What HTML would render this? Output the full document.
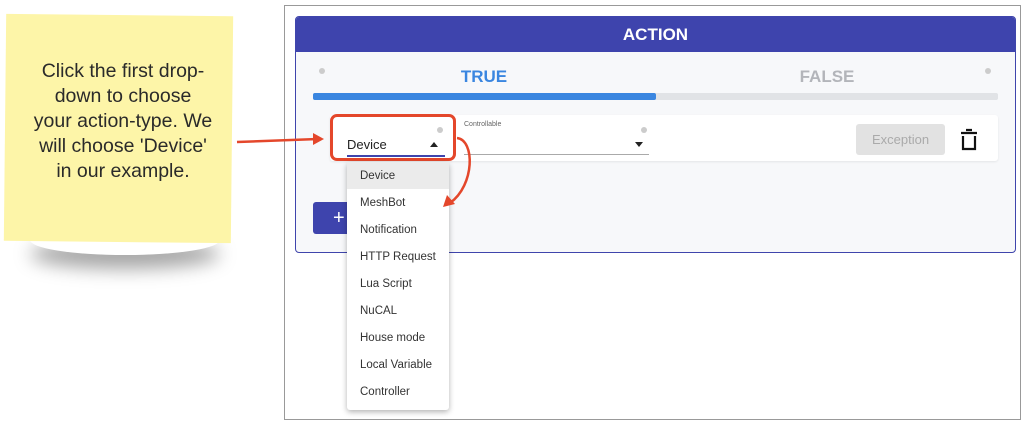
<!DOCTYPE html>
<html><head><style>
body{margin:0;width:1024px;height:425px;background:#fff;position:relative;overflow:hidden;font-family:"Liberation Sans",sans-serif}
.a{position:absolute}
</style></head><body>
<div class="a" style="left:30px;top:225px;width:190px;height:30px;border-radius:50%;box-shadow:0 14px 18px rgba(0,0,0,0.35);"></div>
<div class="a" style="left:5px;top:15px;width:227px;height:227px;background:#fdf5a8;transform:rotate(0.6deg);"></div>
<div class="a" style="left:0px;top:59px;width:246px;text-align:center;font-size:19.5px;line-height:25px;color:#2a2a2a;">Click the first drop-<br>down to choose<br>your action-type. We<br>will choose 'Device'<br>in our example.</div>

<div class="a" style="left:284px;top:5px;width:735px;height:413px;border:1px solid #999;"></div>
<div class="a" style="left:295px;top:16px;width:719px;height:235px;border:1.5px solid #3f45ac;border-radius:4px;background:#f7f8fa;overflow:hidden;">
  <div class="a" style="left:0;top:0;width:100%;height:35px;background:#3e44ad;color:#fff;font-weight:bold;font-size:17px;text-align:center;line-height:35px;">ACTION</div>
</div>
<div class="a" style="left:319px;top:68px;width:6px;height:6px;border-radius:50%;background:#ccc"></div>
<div class="a" style="left:985px;top:68px;width:6px;height:6px;border-radius:50%;background:#ccc"></div>
<div class="a" style="left:434px;top:67px;width:100px;text-align:center;color:#3a86e0;font-size:17px;font-weight:bold;">TRUE</div>
<div class="a" style="left:777px;top:67px;width:100px;text-align:center;color:#b3b5ba;font-size:17px;font-weight:bold;">FALSE</div>
<div class="a" style="left:313px;top:93px;width:685px;height:7px;background:#e1e3e6;border-radius:2px"></div>
<div class="a" style="left:313px;top:93px;width:343px;height:7px;background:#3a86e0;border-radius:2px"></div>
<div class="a" style="left:330px;top:115px;width:668px;height:46px;background:#fff;border-radius:3px;box-shadow:0 1px 2px rgba(0,0,0,0.08)"></div>
<div class="a" style="left:437px;top:127px;width:6px;height:6px;border-radius:50%;background:#ccc"></div>
<div class="a" style="left:641px;top:127px;width:6px;height:6px;border-radius:50%;background:#ccc"></div>
<div class="a" style="left:347px;top:137px;font-size:13px;color:#222">Device</div>
<div class="a" style="left:430px;top:142px;width:0;height:0;border-left:4px solid transparent;border-right:4px solid transparent;border-bottom:5px solid #222"></div>
<div class="a" style="left:347px;top:155px;width:98px;height:2px;background:#3e44ad"></div>
<div class="a" style="left:464px;top:121px;font-size:7px;color:#666">Controllable</div>
<div class="a" style="left:635px;top:142px;width:0;height:0;border-left:4px solid transparent;border-right:4px solid transparent;border-top:5px solid #222"></div>
<div class="a" style="left:464px;top:154px;width:185px;height:1px;background:#aaa"></div>
<div class="a" style="left:856px;top:124px;width:89px;height:31px;background:#e2e2e2;border-radius:3px;color:#aaa;font-size:13px;text-align:center;line-height:31px;">Exception</div>
<svg class="a" style="left:958px;top:127px" width="22" height="26" viewBox="0 0 22 26"><path d="M8 3h6M3 6h16M5 9v13h12V9" fill="none" stroke="#111" stroke-width="2.2"/></svg>
<div class="a" style="left:313px;top:202px;width:40px;height:32px;background:#3e44ad;border-radius:3px;color:#fff;font-size:20px;line-height:32px;padding-left:20px;box-sizing:border-box">+</div>
<div class="a" style="left:330px;top:114px;width:120px;height:41px;border:3px solid #e4472b;border-radius:7px"></div>
<div class="a" style="left:347px;top:162px;width:102px;height:248px;background:#fff;border-radius:3px;box-shadow:0 2px 6px rgba(0,0,0,0.3);font-size:11.5px;color:#333">
  <div style="height:27px;line-height:29px;padding-left:13px;background:#ebebeb">Device</div>
  <div style="height:27px;line-height:29px;padding-left:13px">MeshBot</div>
  <div style="height:27px;line-height:29px;padding-left:13px">Notification</div>
  <div style="height:27px;line-height:29px;padding-left:13px">HTTP Request</div>
  <div style="height:27px;line-height:29px;padding-left:13px">Lua Script</div>
  <div style="height:27px;line-height:29px;padding-left:13px">NuCAL</div>
  <div style="height:27px;line-height:29px;padding-left:13px">House mode</div>
  <div style="height:27px;line-height:29px;padding-left:13px">Local Variable</div>
  <div style="height:27px;line-height:29px;padding-left:13px">Controller</div>
</div>
<svg class="a" style="left:0;top:0" width="1024" height="425">
  <path d="M237 142 L318 139" stroke="#e4472b" stroke-width="2.5" fill="none"/>
  <path d="M313 133 L324 139 L313 145 Z" fill="#e4472b"/>
  <path d="M457 138 C475 140 475 185 450 203" stroke="#e4472b" stroke-width="2.5" fill="none"/>
  <path d="M443 207 L447 195 L455 204 Z" fill="#e4472b"/>
</svg>
</body></html>
